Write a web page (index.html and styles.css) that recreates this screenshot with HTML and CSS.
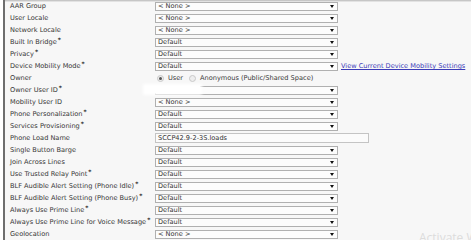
FILE: index.html
```html
<!DOCTYPE html>
<html>
<head>
<meta charset="utf-8">
<link rel="stylesheet" href="styles.css">
</head>
<body>
<div class="panel">
  <div class="row"><div class="lbl">AAR Group</div><div class="sel">&lt; None &gt;<span class="arr"></span></div></div>
  <div class="row"><div class="lbl">User Locale</div><div class="sel">&lt; None &gt;<span class="arr"></span></div></div>
  <div class="row"><div class="lbl">Network Locale</div><div class="sel">&lt; None &gt;<span class="arr"></span></div></div>
  <div class="row"><div class="lbl">Built In Bridge<sup>*</sup></div><div class="sel">Default<span class="arr"></span></div></div>
  <div class="row"><div class="lbl">Privacy<sup>*</sup></div><div class="sel">Default<span class="arr"></span></div></div>
  <div class="row"><div class="lbl">Device Mobility Mode<sup>*</sup></div><div class="ctl"><div class="sel">Default<span class="arr"></span></div><a class="link" href="#">View Current Device Mobility Settings</a></div></div>
  <div class="row"><div class="lbl">Owner</div><div class="ctl radios"><span class="radio on"></span><span class="rtxt">User</span><span class="radio"></span><span class="rtxt">Anonymous (Public/Shared Space)</span></div></div>
  <div class="row"><div class="lbl">Owner User ID<sup>*</sup></div><div class="sel">&nbsp;<span class="arr"></span></div><div class="redact"></div></div>
  <div class="row"><div class="lbl">Mobility User ID</div><div class="sel">&lt; None &gt;<span class="arr"></span></div></div>
  <div class="row"><div class="lbl">Phone Personalization<sup>*</sup></div><div class="sel">Default<span class="arr"></span></div></div>
  <div class="row"><div class="lbl">Services Provisioning<sup>*</sup></div><div class="sel">Default<span class="arr"></span></div></div>
  <div class="row"><div class="lbl">Phone Load Name</div><div class="inp">SCCP42.9-2-3S.loads</div></div>
  <div class="row"><div class="lbl">Single Button Barge</div><div class="sel">Default<span class="arr"></span></div></div>
  <div class="row"><div class="lbl">Join Across Lines</div><div class="sel">Default<span class="arr"></span></div></div>
  <div class="row"><div class="lbl">Use Trusted Relay Point<sup>*</sup></div><div class="sel">Default<span class="arr"></span></div></div>
  <div class="row"><div class="lbl">BLF Audible Alert Setting (Phone Idle)<sup>*</sup></div><div class="sel">Default<span class="arr"></span></div></div>
  <div class="row"><div class="lbl">BLF Audible Alert Setting (Phone Busy)<sup>*</sup></div><div class="sel">Default<span class="arr"></span></div></div>
  <div class="row"><div class="lbl">Always Use Prime Line<sup>*</sup></div><div class="sel">Default<span class="arr"></span></div></div>
  <div class="row"><div class="lbl">Always Use Prime Line for Voice Message<sup>*</sup></div><div class="sel">Default<span class="arr"></span></div></div>
  <div class="row"><div class="lbl">Geolocation</div><div class="sel">&lt; None &gt;<span class="arr"></span></div></div>
  <div class="watermark">Activate W</div>
</div>
</body>
</html>
```
FILE: styles.css
```css
html, body {
  margin: 0;
  padding: 0;
  background: #ffffff;
  overflow: hidden;
}
body {
  width: 474px;
  height: 240px;
  font-family: "DejaVu Sans", Verdana, sans-serif;
}
.panel {
  position: relative;
  width: 468px;
  height: 240px;
  margin-left: 3px;
  border-left: 2px solid #6e6e6e;
  background: #f7f7f7;
  box-sizing: border-box;
  overflow: hidden;
}
.panel::before {
  content: "";
  position: absolute;
  left: 0;
  top: 0;
  right: 0;
  height: 1px;
  background: #c6c6c6;
  border-bottom: 1px solid #e2e2e2;
}
.row {
  position: relative;
  display: grid;
  grid-template-columns: 145px auto;
  align-items: center;
  height: 12px;
  padding-left: 5px;
}
.lbl {
  font-size: 6.6px;
  color: #363636;
  white-space: nowrap;
  line-height: 12px;
}
.lbl sup {
  font-size: 6px;
  font-weight: bold;
  vertical-align: 0;
  position: relative;
  top: -2px;
  margin-left: 1px;
  color: #222;
}
.ctl {
  display: flex;
  align-items: center;
}
.sel {
  position: relative;
  width: 183px;
  height: 9px;
  box-sizing: border-box;
  border: 1px solid #b0b0b0;
  background: #fcfcfc;
  font-size: 6.6px;
  line-height: 7px;
  padding-left: 2px;
  color: #333;
  white-space: nowrap;
}
.arr {
  position: absolute;
  right: 3px;
  top: 2px;
  width: 0;
  height: 0;
  border-left: 2px solid transparent;
  border-right: 2px solid transparent;
  border-top: 3px solid #111;
}
.inp {
  width: 214px;
  height: 10px;
  box-sizing: border-box;
  border: 1px solid #c4c4c4;
  background: #fbfbfb;
  font-size: 6.6px;
  line-height: 8px;
  padding-left: 2px;
  color: #333;
}
.link {
  margin-left: 3px;
  font-size: 6.6px;
  color: #3b3bb8;
  text-decoration: underline;
  white-space: nowrap;
}
.radios {
  font-size: 6.6px;
  color: #3a3a3a;
}
.radio {
  width: 5px;
  height: 5px;
  border-radius: 50%;
  border: 1px solid #c8c8c8;
  background: #eeeeee;
  margin-left: 2px;
  margin-right: 4px;
  box-sizing: content-box;
  position: relative;
}
.radio.on::after {
  content: "";
  position: absolute;
  left: 1px;
  top: 1px;
  width: 3px;
  height: 3px;
  border-radius: 50%;
  background: #555;
}
.rtxt {
  margin-right: 4px;
}
.redact {
  position: absolute;
  left: 140px;
  top: 2px;
  width: 55px;
  height: 7px;
  background: #ffffff;
  box-shadow: 0 0 3px 2px #ffffff;
}
.watermark {
  position: absolute;
  left: 414px;
  top: 229px;
  font-family: "Open Sans", sans-serif;
  font-size: 12px;
  color: #dcdcdc;
  white-space: nowrap;
}
```
